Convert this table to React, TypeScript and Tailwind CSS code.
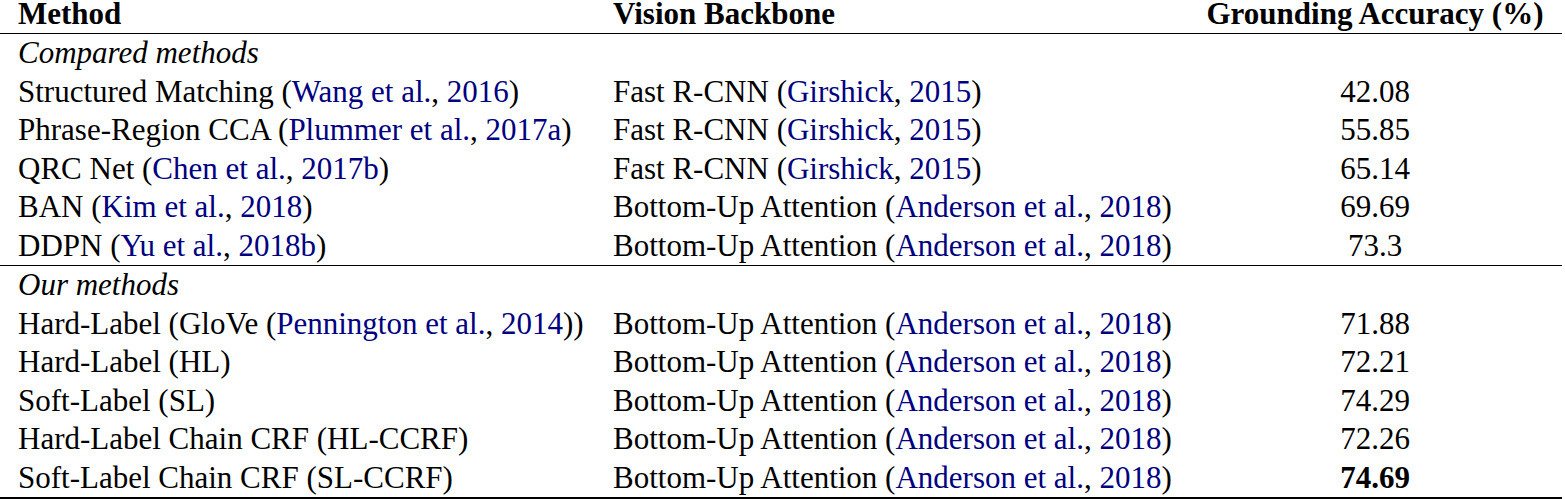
const serif = { fontFamily: '"Liberation Serif", "Times New Roman", serif' };

type Cite = { text: string; cite?: string; tail?: string };

type Row = {
  method: Cite;
  backbone: Cite;
  acc: string;
  best?: boolean;
};

const FAST = { text: 'Fast R-CNN (', cite: 'Girshick, 2015', tail: ')' };
const BUA = { text: 'Bottom-Up Attention (', cite: 'Anderson et al., 2018', tail: ')' };

const compared: Row[] = [
  { method: { text: 'Structured Matching (', cite: 'Wang et al., 2016', tail: ')' }, backbone: FAST, acc: '42.08' },
  { method: { text: 'Phrase-Region CCA (', cite: 'Plummer et al., 2017a', tail: ')' }, backbone: FAST, acc: '55.85' },
  { method: { text: 'QRC Net (', cite: 'Chen et al., 2017b', tail: ')' }, backbone: FAST, acc: '65.14' },
  { method: { text: 'BAN (', cite: 'Kim et al., 2018', tail: ')' }, backbone: BUA, acc: '69.69' },
  { method: { text: 'DDPN (', cite: 'Yu et al., 2018b', tail: ')' }, backbone: BUA, acc: '73.3' },
];

const ours: Row[] = [
  { method: { text: 'Hard-Label (GloVe (', cite: 'Pennington et al., 2014', tail: '))' }, backbone: BUA, acc: '71.88' },
  { method: { text: 'Hard-Label (HL)' }, backbone: BUA, acc: '72.21' },
  { method: { text: 'Soft-Label (SL)' }, backbone: BUA, acc: '74.29' },
  { method: { text: 'Hard-Label Chain CRF (HL-CCRF)' }, backbone: BUA, acc: '72.26' },
  { method: { text: 'Soft-Label Chain CRF (SL-CCRF)' }, backbone: BUA, acc: '74.69', best: true },
];

// citation split into plain text + linked (blue) part, as LaTeX hyperref renders it
function Cited({ c }: { c: Cite }) {
  if (!c.cite) return <>{c.text}</>;
  const [who, year] = c.cite.split(/, (?=\d)/);
  return (
    <>
      {c.text}
      <span className="text-[#000080]">{who}</span>, <span className="text-[#000080]">{year}</span>
      {c.tail}
    </>
  );
}

function BodyRow({ r }: { r: Row }) {
  return (
    <div className="grid grid-cols-[595px_593px_374px] h-[38.5px] items-center leading-[38.5px]">
      <div className="pl-[18px] whitespace-nowrap"><Cited c={r.method} /></div>
      <div className="pl-[18px] whitespace-nowrap"><Cited c={r.backbone} /></div>
      <div className={r.best ? 'text-center font-bold' : 'text-center'}>{r.acc}</div>
    </div>
  );
}

function GroupLabel({ label }: { label: string }) {
  return (
    <div className="h-[38.5px] leading-[38.5px] pl-[18px] italic">{label}</div>
  );
}

export default function App() {
  return (
    <div className="w-[1565px] h-[499px] overflow-hidden bg-white text-black text-[31px]" style={serif}>
      <div className="w-[1562px] flex flex-col">
        <div className="grid grid-cols-[595px_593px_374px] h-[33px] leading-[27px] font-bold">
          <div className="pl-[18px]">Method</div>
          <div className="pl-[18px]">Vision Backbone</div>
          <div className="text-center whitespace-nowrap">Grounding Accuracy (%)</div>
        </div>
        <div className="h-px bg-black" />

        <GroupLabel label="Compared methods" />
        {compared.map(r => <BodyRow key={r.acc} r={r} />)}
        <div className="h-px bg-black" />

        <GroupLabel label="Our methods" />
        {ours.map(r => <BodyRow key={r.acc} r={r} />)}
        <div className="h-[2px] bg-black" />
      </div>
    </div>
  );
}
